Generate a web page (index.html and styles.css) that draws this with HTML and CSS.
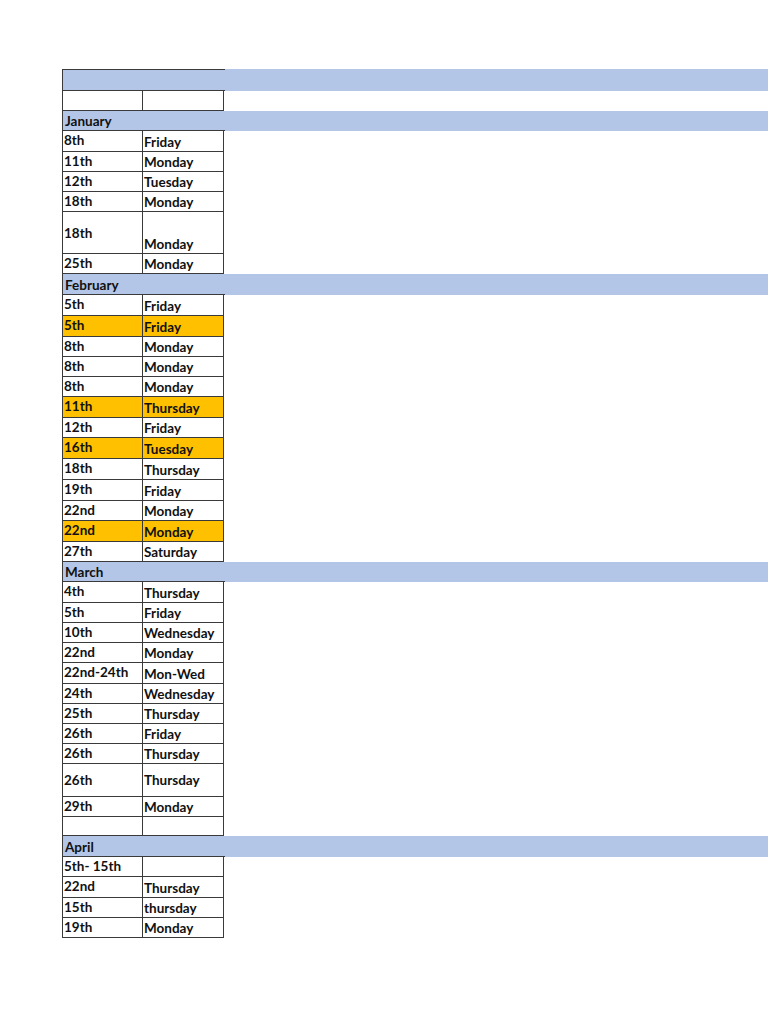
FILE: index.html
```html
<!DOCTYPE html>
<html>
<head>
<meta charset="utf-8">
<link rel="stylesheet" href="styles.css">
</head>
<body>
<div class="sheet">
  <div class="band band-top" style="height:22px"></div>
  <div class="row" style="height:20px"><div class="c d"></div><div class="c w"></div></div>

  <div class="band" style="height:20px">January</div>
  <div class="row" style="height:21px"><div class="c d">8th</div><div class="c w">Friday</div></div>
  <div class="row" style="height:20px"><div class="c d">11th</div><div class="c w">Monday</div></div>
  <div class="row" style="height:20px"><div class="c d">12th</div><div class="c w">Tuesday</div></div>
  <div class="row" style="height:20px"><div class="c d">18th</div><div class="c w">Monday</div></div>
  <div class="row" style="height:42px"><div class="c d mid">18th</div><div class="c w">Monday</div></div>
  <div class="row" style="height:20px"><div class="c d">25th</div><div class="c w">Monday</div></div>

  <div class="band" style="height:21px">February</div>
  <div class="row" style="height:21px"><div class="c d">5th</div><div class="c w">Friday</div></div>
  <div class="row hl" style="height:21px"><div class="c d">5th</div><div class="c w">Friday</div></div>
  <div class="row" style="height:20px"><div class="c d">8th</div><div class="c w">Monday</div></div>
  <div class="row" style="height:20px"><div class="c d">8th</div><div class="c w">Monday</div></div>
  <div class="row" style="height:20px"><div class="c d">8th</div><div class="c w">Monday</div></div>
  <div class="row hl" style="height:21px"><div class="c d">11th</div><div class="c w">Thursday</div></div>
  <div class="row" style="height:20px"><div class="c d">12th</div><div class="c w">Friday</div></div>
  <div class="row hl" style="height:21px"><div class="c d">16th</div><div class="c w">Tuesday</div></div>
  <div class="row" style="height:21px"><div class="c d">18th</div><div class="c w">Thursday</div></div>
  <div class="row" style="height:21px"><div class="c d">19th</div><div class="c w">Friday</div></div>
  <div class="row" style="height:20px"><div class="c d">22nd</div><div class="c w">Monday</div></div>
  <div class="row hl" style="height:21px"><div class="c d">22nd</div><div class="c w">Monday</div></div>
  <div class="row" style="height:20px"><div class="c d">27th</div><div class="c w">Saturday</div></div>

  <div class="band" style="height:20px">March</div>
  <div class="row" style="height:21px"><div class="c d">4th</div><div class="c w">Thursday</div></div>
  <div class="row" style="height:20px"><div class="c d">5th</div><div class="c w">Friday</div></div>
  <div class="row" style="height:20px"><div class="c d">10th</div><div class="c w">Wednesday</div></div>
  <div class="row" style="height:20px"><div class="c d">22nd</div><div class="c w">Monday</div></div>
  <div class="row" style="height:21px"><div class="c d">22nd-24th</div><div class="c w">Mon-Wed</div></div>
  <div class="row" style="height:20px"><div class="c d">24th</div><div class="c w">Wednesday</div></div>
  <div class="row" style="height:20px"><div class="c d">25th</div><div class="c w">Thursday</div></div>
  <div class="row" style="height:20px"><div class="c d">26th</div><div class="c w">Friday</div></div>
  <div class="row" style="height:20px"><div class="c d">26th</div><div class="c w">Thursday</div></div>
  <div class="row" style="height:33px"><div class="c d mid">26th</div><div class="c w mid">Thursday</div></div>
  <div class="row" style="height:20px"><div class="c d">29th</div><div class="c w">Monday</div></div>
  <div class="row" style="height:19px"><div class="c d"></div><div class="c w"></div></div>

  <div class="band" style="height:21px">April</div>
  <div class="row" style="height:20px"><div class="c d">5th- 15th</div><div class="c w"></div></div>
  <div class="row" style="height:21px"><div class="c d">22nd</div><div class="c w">Thursday</div></div>
  <div class="row" style="height:20px"><div class="c d">15th</div><div class="c w">thursday</div></div>
  <div class="row" style="height:20px"><div class="c d">19th</div><div class="c w">Monday</div></div>
</div>
</body>
</html>
```
FILE: styles.css
```css
html, body {
  margin: 0;
  padding: 0;
  background: #ffffff;
}
body {
  font-family: Lato, "Open Sans", "Liberation Sans", sans-serif;
  font-weight: 700;
  font-size: 13.5px;
  color: #111111;
}
.sheet {
  margin: 69px 0 0 62px;
  width: 706px;
  display: flex;
  flex-direction: column;
}
.band {
  box-sizing: border-box;
  background:
    linear-gradient(#3a3a3a, #3a3a3a) no-repeat left bottom / 162px 1px,
    #b4c6e7;
  border-left: 1px solid #3a3a3a;
  padding: 0 0 0 2px;
  display: flex;
  align-items: center;
  line-height: 16px;
}
.band-top {
  background:
    linear-gradient(#3a3a3a, #3a3a3a) no-repeat left top / 162px 1px,
    linear-gradient(#3a3a3a, #3a3a3a) no-repeat left bottom / 162px 1px,
    #b4c6e7;
}
.row {
  display: grid;
  grid-template-columns: 81px 81px;
  box-sizing: border-box;
}
.c {
  box-sizing: border-box;
  border-bottom: 1px solid #3a3a3a;
  border-right: 1px solid #3a3a3a;
  display: flex;
  line-height: 16px;
  white-space: nowrap;
  overflow: hidden;
}
.d {
  border-left: 1px solid #3a3a3a;
  align-items: flex-start;
  padding: 1px 0 0 1px;
}
.w {
  align-items: flex-end;
  padding: 0 0 1px 1px;
}
.c.mid {
  align-items: center;
  padding-top: 0;
  padding-bottom: 0;
}
.hl .c {
  background: #ffc000;
}
```
